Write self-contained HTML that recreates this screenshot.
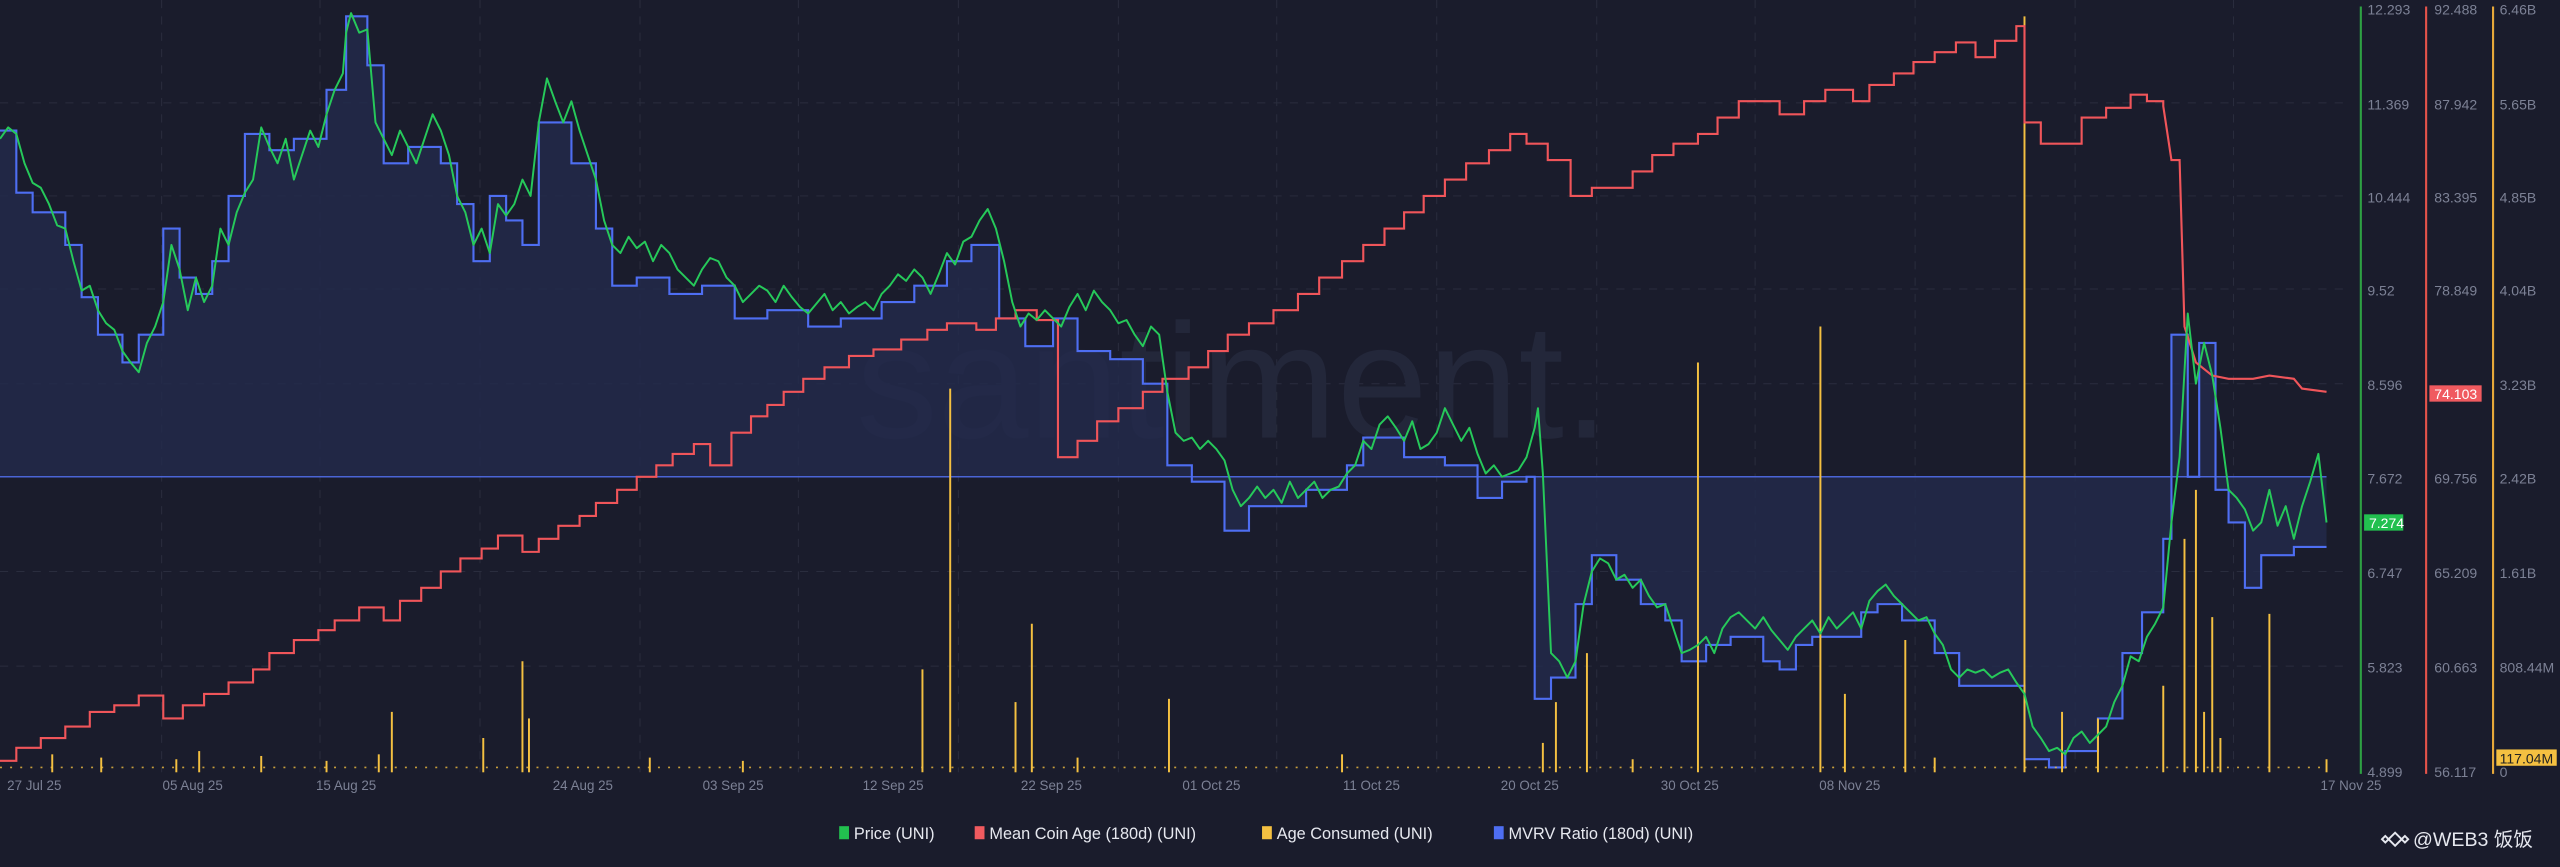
<!DOCTYPE html>
<html><head><meta charset="utf-8"><style>
html,body{margin:0;padding:0;background:#1a1c2c;}
svg{display:block}
text{font-family:"Liberation Sans",sans-serif;}
</style></head><body>
<svg width="2560" height="867" viewBox="0 0 1568 531" preserveAspectRatio="none" xmlns="http://www.w3.org/2000/svg">
<rect width="1568" height="531" fill="#1a1c2c"/>
<g stroke="#2a2d3e" stroke-width="0.6" stroke-dasharray="5,5">
<line x1="0" y1="63" x2="1440" y2="63"/><line x1="0" y1="120" x2="1440" y2="120"/><line x1="0" y1="177" x2="1440" y2="177"/><line x1="0" y1="235" x2="1440" y2="235"/><line x1="0" y1="350" x2="1440" y2="350"/><line x1="0" y1="408" x2="1440" y2="408"/>
<line x1="99" y1="0" x2="99" y2="473"/><line x1="196" y1="0" x2="196" y2="473"/><line x1="294" y1="0" x2="294" y2="473"/><line x1="392" y1="0" x2="392" y2="473"/><line x1="489" y1="0" x2="489" y2="473"/><line x1="587" y1="0" x2="587" y2="473"/><line x1="685" y1="0" x2="685" y2="473"/><line x1="782" y1="0" x2="782" y2="473"/><line x1="880" y1="0" x2="880" y2="473"/><line x1="978" y1="0" x2="978" y2="473"/><line x1="1075" y1="0" x2="1075" y2="473"/><line x1="1173" y1="0" x2="1173" y2="473"/><line x1="1271" y1="0" x2="1271" y2="473"/><line x1="1368" y1="0" x2="1368" y2="473"/>
</g>
<text x="755" y="268" font-size="100" fill="#23273a" text-anchor="middle">santiment.</text>
<polygon fill="#232a4c" fill-opacity="0.8" points="0,292 0,80 10,80 10,118 20,118 20,130 40,130 40,150 50,150 50,182 60,182 60,205 75,205 75,222 85,222 85,205 100,205 100,140 110,140 110,170 120,170 120,180 130,180 130,160 140,160 140,120 150,120 150,82 165,82 165,92 180,92 180,85 200,85 200,55 212,55 212,10 225,10 225,40 235,40 235,100 250,100 250,90 270,90 270,100 280,100 280,125 290,125 290,160 300,160 300,120 310,120 310,135 320,135 320,150 330,150 330,75 350,75 350,100 365,100 365,140 375,140 375,175 390,175 390,170 410,170 410,180 430,180 430,175 450,175 450,195 470,195 470,190 495,190 495,200 515,200 515,195 540,195 540,185 560,185 560,175 580,175 580,160 595,160 595,150 612,150 612,195 628,195 628,212 645,212 645,195 660,195 660,215 680,215 680,220 700,220 700,235 715,235 715,285 730,285 730,295 750,295 750,325 765,325 765,310 775,310 775,310 800,310 800,300 825,300 825,285 835,285 835,268 860,268 860,280 885,280 885,285 905,285 905,305 920,305 920,295 935,295 935,292 940,292 940,428 950,428 950,415 965,415 965,370 975,370 975,340 990,340 990,355 1005,355 1005,370 1020,370 1020,380 1030,380 1030,405 1045,405 1045,395 1060,395 1060,390 1080,390 1080,405 1090,405 1090,410 1100,410 1100,395 1110,395 1110,390 1140,390 1140,375 1150,375 1150,370 1165,370 1165,380 1185,380 1185,400 1200,400 1200,420 1215,420 1215,420 1240,420 1240,465 1255,465 1255,470 1265,470 1265,460 1285,460 1285,440 1300,440 1300,400 1312,400 1312,375 1325,375 1325,330 1330,330 1330,205 1340,205 1340,292 1347,292 1347,210 1357,210 1357,300 1365,300 1365,320 1375,320 1375,360 1385,360 1385,340 1405,340 1405,335 1425,335 1425,292"/>
<line x1="0" y1="292" x2="1425" y2="292" stroke="#4a64d6" stroke-width="0.9"/>
<polyline fill="none" stroke="#4e6ef2" stroke-width="1.3" points="0,80 10,80 10,118 20,118 20,130 40,130 40,150 50,150 50,182 60,182 60,205 75,205 75,222 85,222 85,205 100,205 100,140 110,140 110,170 120,170 120,180 130,180 130,160 140,160 140,120 150,120 150,82 165,82 165,92 180,92 180,85 200,85 200,55 212,55 212,10 225,10 225,40 235,40 235,100 250,100 250,90 270,90 270,100 280,100 280,125 290,125 290,160 300,160 300,120 310,120 310,135 320,135 320,150 330,150 330,75 350,75 350,100 365,100 365,140 375,140 375,175 390,175 390,170 410,170 410,180 430,180 430,175 450,175 450,195 470,195 470,190 495,190 495,200 515,200 515,195 540,195 540,185 560,185 560,175 580,175 580,160 595,160 595,150 612,150 612,195 628,195 628,212 645,212 645,195 660,195 660,215 680,215 680,220 700,220 700,235 715,235 715,285 730,285 730,295 750,295 750,325 765,325 765,310 800,310 800,300 825,300 825,285 835,285 835,268 860,268 860,280 885,280 885,285 905,285 905,305 920,305 920,295 935,295 935,292 940,292 940,428 950,428 950,415 965,415 965,370 975,370 975,340 990,340 990,355 1005,355 1005,370 1020,370 1020,380 1030,380 1030,405 1045,405 1045,395 1060,395 1060,390 1080,390 1080,405 1090,405 1090,410 1100,410 1100,395 1110,395 1110,390 1140,390 1140,375 1150,375 1150,370 1165,370 1165,380 1185,380 1185,400 1200,400 1200,420 1240,420 1240,465 1255,465 1255,470 1265,470 1265,460 1285,460 1285,440 1300,440 1300,400 1312,400 1312,375 1325,375 1325,330 1330,330 1330,205 1340,205 1340,292 1347,292 1347,210 1357,210 1357,300 1365,300 1365,320 1375,320 1375,360 1385,360 1385,340 1405,340 1405,335 1425,335"/>
<g stroke="#f4c041" stroke-width="1.2">
<line x1="582" y1="473" x2="582" y2="238"/><line x1="1240" y1="473" x2="1240" y2="10"/><line x1="1115" y1="473" x2="1115" y2="200"/><line x1="1040" y1="473" x2="1040" y2="222"/><line x1="1345" y1="473" x2="1345" y2="300"/><line x1="1338" y1="473" x2="1338" y2="330"/><line x1="632" y1="473" x2="632" y2="382"/><line x1="565" y1="473" x2="565" y2="410"/><line x1="320" y1="473" x2="320" y2="405"/><line x1="716" y1="473" x2="716" y2="428"/><line x1="622" y1="473" x2="622" y2="430"/><line x1="972" y1="473" x2="972" y2="400"/><line x1="953" y1="473" x2="953" y2="430"/><line x1="1167" y1="473" x2="1167" y2="392"/><line x1="1130" y1="473" x2="1130" y2="425"/><line x1="1355" y1="473" x2="1355" y2="378"/><line x1="1390" y1="473" x2="1390" y2="376"/><line x1="1350" y1="473" x2="1350" y2="436"/><line x1="1263" y1="473" x2="1263" y2="436"/><line x1="1325" y1="473" x2="1325" y2="420"/><line x1="240" y1="473" x2="240" y2="436"/><line x1="296" y1="473" x2="296" y2="452"/><line x1="324" y1="473" x2="324" y2="440"/><line x1="945" y1="473" x2="945" y2="455"/><line x1="1285" y1="473" x2="1285" y2="440"/><line x1="1360" y1="473" x2="1360" y2="452"/>
<line x1="32" y1="473" x2="32" y2="462"/><line x1="62" y1="473" x2="62" y2="464"/><line x1="108" y1="473" x2="108" y2="465"/><line x1="122" y1="473" x2="122" y2="460"/><line x1="160" y1="473" x2="160" y2="463"/><line x1="200" y1="473" x2="200" y2="466"/><line x1="232" y1="473" x2="232" y2="462"/><line x1="398" y1="473" x2="398" y2="464"/><line x1="455" y1="473" x2="455" y2="466"/><line x1="660" y1="473" x2="660" y2="464"/><line x1="822" y1="473" x2="822" y2="462"/><line x1="1000" y1="473" x2="1000" y2="465"/><line x1="1185" y1="473" x2="1185" y2="464"/><line x1="1425" y1="473" x2="1425" y2="465"/>
</g>
<g stroke="#f4c041" stroke-width="1" stroke-dasharray="1.2,5" opacity="0.8">
<line x1="0" y1="470" x2="1425" y2="470"/>
</g>
<polyline fill="none" stroke="#f0555a" stroke-width="1.3" points="0,466 10,466 10,458 25,458 25,452 40,452 40,445 55,445 55,436 70,436 70,432 85,432 85,426 100,426 100,440 112,440 112,432 125,432 125,425 140,425 140,418 155,418 155,410 165,410 165,400 180,400 180,392 195,392 195,386 205,386 205,380 220,380 220,372 235,372 235,380 245,380 245,368 258,368 258,360 270,360 270,350 282,350 282,342 295,342 295,336 305,336 305,328 320,328 320,338 330,338 330,330 342,330 342,322 355,322 355,316 365,316 365,308 378,308 378,300 390,300 390,292 402,292 402,285 412,285 412,278 425,278 425,272 435,272 435,285 448,285 448,265 460,265 460,255 470,255 470,248 480,248 480,240 492,240 492,232 505,232 505,225 520,225 520,218 535,218 535,214 552,214 552,208 568,208 568,202 580,202 580,198 598,198 598,202 610,202 610,195 622,195 622,190 635,190 635,196 648,196 648,280 660,280 660,270 672,270 672,258 685,258 685,250 700,250 700,240 712,240 712,232 728,232 728,225 740,225 740,215 752,215 752,205 765,205 765,198 780,198 780,190 795,190 795,180 808,180 808,170 822,170 822,160 835,160 835,150 848,150 848,140 860,140 860,130 872,130 872,120 885,120 885,110 898,110 898,100 912,100 912,92 925,92 925,82 935,82 935,88 948,88 948,98 962,98 962,120 975,120 975,115 1000,115 1000,105 1012,105 1012,95 1025,95 1025,88 1040,88 1040,82 1052,82 1052,72 1065,72 1065,62 1090,62 1090,70 1105,70 1105,62 1118,62 1118,55 1135,55 1135,62 1145,62 1145,52 1160,52 1160,45 1172,45 1172,38 1185,38 1185,32 1198,32 1198,26 1210,26 1210,35 1222,35 1222,25 1235,25 1235,16 1240,16 1240,75 1250,75 1250,88 1275,88 1275,72 1290,72 1290,66 1305,66 1305,58 1315,58 1315,62 1325,62 1325,65 1330,98 1335,98 1338,200 1345,222 1355,230 1365,232 1380,232 1390,230 1405,232 1410,238 1425,240"/>
<polyline fill="none" stroke="#26c95a" stroke-width="1.2" stroke-linejoin="round" points="0,85 5,78 10,82 15,100 20,112 25,115 30,125 35,138 40,140 45,160 50,178 55,175 60,190 65,198 70,202 75,215 80,222 85,228 90,210 95,200 100,185 105,150 110,165 115,190 120,170 125,185 130,175 135,140 140,150 145,130 150,118 155,110 160,78 165,90 170,100 175,85 180,110 185,95 190,80 195,90 200,70 205,55 210,45 212,20 215,8 220,20 225,18 230,75 235,85 240,95 245,80 250,90 255,100 260,85 265,70 270,80 275,95 280,120 285,130 290,150 295,140 300,155 305,125 310,132 315,125 320,110 325,120 330,75 335,48 340,62 345,75 350,62 355,80 360,95 365,110 370,135 375,150 380,155 385,145 390,152 395,148 400,160 405,150 410,155 415,165 420,170 425,175 430,165 435,158 440,160 445,170 450,175 455,185 460,180 465,175 470,178 475,185 480,175 485,182 490,188 495,192 500,186 505,180 510,190 515,185 520,192 525,188 530,185 535,190 540,180 545,175 550,168 555,172 560,165 565,170 570,180 575,168 580,155 585,162 590,148 595,145 600,135 605,128 610,140 615,160 620,185 625,200 630,192 635,196 640,190 645,195 650,200 655,188 660,180 665,190 670,178 675,185 680,190 685,198 690,196 695,205 700,212 705,200 710,205 715,240 720,265 725,270 730,268 735,275 740,270 745,275 750,282 755,300 760,310 765,305 770,298 775,305 780,300 785,308 790,295 795,305 800,300 805,295 810,305 815,300 820,298 825,290 830,285 835,270 840,275 845,260 850,255 855,262 860,270 865,258 870,275 875,272 880,265 885,250 890,260 895,270 900,262 905,278 910,290 915,285 920,292 925,290 930,288 935,280 940,262 942,250 945,290 950,400 955,405 960,415 965,405 970,370 975,350 980,342 985,345 990,355 995,352 1000,360 1005,355 1010,365 1015,372 1020,370 1025,385 1030,400 1035,398 1040,395 1045,390 1050,400 1055,385 1060,378 1065,375 1070,380 1075,385 1080,378 1085,386 1090,392 1095,398 1100,390 1105,385 1110,380 1115,388 1120,378 1125,385 1130,380 1135,375 1140,385 1145,368 1150,362 1155,358 1160,365 1165,370 1170,375 1175,380 1180,378 1185,388 1190,395 1195,410 1200,415 1205,410 1210,412 1215,410 1220,415 1225,412 1230,410 1235,418 1240,425 1245,445 1250,452 1255,460 1260,458 1265,462 1270,452 1275,448 1280,455 1285,450 1290,445 1295,430 1300,420 1305,402 1310,405 1315,390 1320,382 1325,372 1330,320 1335,280 1340,192 1345,235 1350,210 1355,230 1360,262 1365,300 1370,305 1375,312 1380,325 1385,320 1390,300 1395,322 1400,310 1405,330 1410,310 1415,295 1420,278 1425,320"/>
<line x1="1446" y1="4" x2="1446" y2="474" stroke="#2ea043" stroke-width="1.3"/>
<line x1="1486" y1="4" x2="1486" y2="474" stroke="#e5534b" stroke-width="1.3"/>
<line x1="1527" y1="4" x2="1527" y2="474" stroke="#e6a83a" stroke-width="1.3"/>
<g font-size="8.6" fill="#7c8195">
<text x="1450" y="9">12.293</text><text x="1450" y="67">11.369</text><text x="1450" y="124">10.444</text><text x="1450" y="181">9.52</text><text x="1450" y="239">8.596</text><text x="1450" y="296">7.672</text><text x="1450" y="354">6.747</text><text x="1450" y="412">5.823</text><text x="1450" y="476">4.899</text>
<text x="1491" y="9">92.488</text><text x="1491" y="67">87.942</text><text x="1491" y="124">83.395</text><text x="1491" y="181">78.849</text><text x="1491" y="296">69.756</text><text x="1491" y="354">65.209</text><text x="1491" y="412">60.663</text><text x="1491" y="476">56.117</text>
<text x="1531" y="9">6.46B</text><text x="1531" y="67">5.65B</text><text x="1531" y="124">4.85B</text><text x="1531" y="181">4.04B</text><text x="1531" y="239">3.23B</text><text x="1531" y="296">2.42B</text><text x="1531" y="354">1.61B</text><text x="1531" y="412">808.44M</text><text x="1531" y="476">0</text>
</g>
<rect x="1448" y="315" width="24" height="10" fill="#22c04f"/><text x="1451" y="323.5" font-size="8.6" fill="#fff">7.274</text>
<rect x="1488" y="236" width="32" height="10" fill="#f05a5f"/><text x="1491" y="244.5" font-size="8.6" fill="#fff">74.103</text>
<rect x="1529" y="459" width="37" height="10" fill="#f4c041"/><text x="1531" y="467.5" font-size="8.6" fill="#222">117.04M</text>
<g font-size="8.2" fill="#7c8195" text-anchor="middle">
<text x="21" y="484">27 Jul 25</text><text x="118" y="484">05 Aug 25</text><text x="212" y="484">15 Aug 25</text><text x="357" y="484">24 Aug 25</text><text x="449" y="484">03 Sep 25</text><text x="547" y="484">12 Sep 25</text><text x="644" y="484">22 Sep 25</text><text x="742" y="484">01 Oct 25</text><text x="840" y="484">11 Oct 25</text><text x="937" y="484">20 Oct 25</text><text x="1035" y="484">30 Oct 25</text><text x="1133" y="484">08 Nov 25</text><text x="1440" y="484">17 Nov 25</text>
</g>
<g font-size="10" fill="#e6e8ef">
<rect x="514" y="506" width="6" height="8" fill="#22c04f"/><text x="523" y="514">Price (UNI)</text>
<rect x="597" y="506" width="6" height="8" fill="#f05a5f"/><text x="606" y="514">Mean Coin Age (180d) (UNI)</text>
<rect x="773" y="506" width="6" height="8" fill="#f4c041"/><text x="782" y="514">Age Consumed (UNI)</text>
<rect x="915" y="506" width="6" height="8" fill="#4e6ef2"/><text x="924" y="514">MVRV Ratio (180d) (UNI)</text>
</g>
<g transform="translate(1463,514)">
<path d="M0,0 l4,-4 l4,4 l-4,4z M-4,0 l2,-2 l2,2 l-2,2z M8,0 l2,-2 l2,2 l-2,2z" fill="none" stroke="#e6e8ef" stroke-width="1.2"/>
</g>
<text x="1478" y="518" font-size="12" fill="#e6e8ef" font-family="Liberation Sans, Noto Sans CJK SC, sans-serif">@WEB3 饭饭</text>
</svg>
</body></html>
